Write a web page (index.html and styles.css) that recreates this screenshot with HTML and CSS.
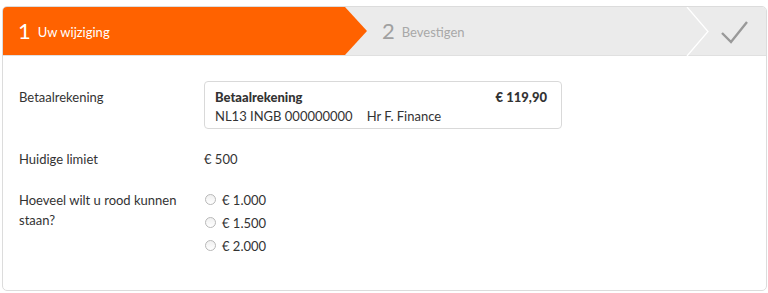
FILE: index.html
```html
<!DOCTYPE html>
<html>
<head>
<meta charset="utf-8">
<link rel="stylesheet" href="styles.css">
</head>
<body>
<div class="card">
  <div class="steps">
    <div class="step step-active"><span class="num">1</span><span class="label">Uw wijziging</span></div>
    <div class="step step-next"><span class="num">2</span><span class="label">Bevestigen</span></div>
    <div class="step step-done">
      <svg class="chev" width="24" height="49" viewBox="0 0 24 49"><polyline points="1,0 22,24.5 1,49" fill="none" stroke="#fff" stroke-width="1.3"/></svg>
      <svg class="check" width="30" height="26" viewBox="0 0 30 26"><polyline points="2,14 11,23 27,3" fill="none" stroke="#999" stroke-width="2.4"/></svg>
    </div>
  </div>
  <div class="body">
    <div class="row row-account">
      <div class="lbl">Betaalrekening</div>
      <div class="val">
        <div class="account">
          <div class="acc-line"><b>Betaalrekening</b><b>€ 119,90</b></div>
          <div class="acc-line2"><span>NL13 INGB 000000000</span><span>Hr F. Finance</span></div>
        </div>
      </div>
    </div>
    <div class="row row-limit">
      <div class="lbl">Huidige limiet</div>
      <div class="val">€ 500</div>
    </div>
    <div class="row row-choice">
      <div class="lbl">Hoeveel wilt u rood kunnen<br>staan?</div>
      <div class="val radios">
        <label class="radio"><span class="circle"></span>€ 1.000</label>
        <label class="radio"><span class="circle"></span>€ 1.500</label>
        <label class="radio"><span class="circle"></span>€ 2.000</label>
      </div>
    </div>
  </div>
</div>
</body>
</html>
```
FILE: styles.css
```css
* { box-sizing: border-box; }
body {
  margin: 0;
  background: #fff;
  font-family: Lato, "Noto Sans", sans-serif;
  font-size: 13px;
  color: #333;
}
.card {
  margin: 6px 2px 0 2px;
  width: 765px;
  height: 285px;
  border: 1px solid #dcdcdc;
  border-radius: 5px;
  overflow: hidden;
}
.steps {
  display: flex;
  height: 49px;
  background: #ebebeb;
  border-bottom: 1px solid #e0e0e0;
}
.step {
  display: flex;
  align-items: center;
}
.step-active {
  width: 364px;
  background: #ff6200;
  color: #fff;
  padding-left: 15px;
  clip-path: polygon(0 0, 342px 0, 364px 50%, 342px 100%, 0 100%);
}
.step-next {
  flex: 1;
  color: #a8a8a8;
  padding-left: 15px;
}
.num {
  font-size: 22px;
  margin-right: 7px;
  line-height: 1;
}
.step-next .num { color: #a0a0a0; }
.label { font-size: 13px; padding-top: 2px; }
.step-done {
  width: 80px;
}
.chev { display: block; }
.check { margin-left: 10px; margin-top: 1px; }
.body {
  padding: 25px 16px 0 16px;
}
.row {
  display: grid;
  grid-template-columns: 185px 358px;
}
.lbl { line-height: 20px; }
.row-account .lbl { padding-top: 6px; }
.account {
  border: 1px solid #d9d9d9;
  border-radius: 4px;
  padding: 6px 14px 4px 10px;
  height: 48px;
}
.acc-line {
  display: flex;
  justify-content: space-between;
  line-height: 18px;
  font-weight: 700;
}
.acc-line2 { line-height: 20px; }
.acc-line2 span:first-child { margin-right: 14px; }
.row-limit { margin-top: 20px; }
.row-limit .val { line-height: 20px; }
.row-choice { margin-top: 21px; }
.radios { display: flex; flex-direction: column; margin-top: -2px; }
.radio {
  display: flex;
  align-items: center;
  height: 23px;
}
.circle {
  width: 11px;
  height: 11px;
  border: 1px solid #b8b8b8;
  border-radius: 50%;
  background: linear-gradient(#f0f0f0, #fff);
  margin: 0 6px 0 1px;
}
```
